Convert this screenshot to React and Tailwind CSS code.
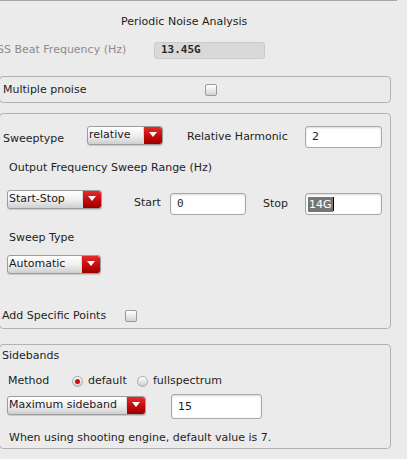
import React from "react";

const Combo = ({ label, w }) => {
  return (
    <div
      className={`flex h-[19px] ${w} rounded-[3px] border border-[#9c9c9c] bg-gradient-to-b from-white via-[#f0f0f0] to-[#cfcfcf] overflow-hidden shadow-[0_1px_1px_rgba(0,0,0,0.15)]`}
    >
      <span className="flex-1 pl-[1px] leading-[15px] text-[#1a1a1a]">{label}</span>
      <span className="w-[19px] flex justify-center pt-[5px] bg-gradient-to-b from-[#e52a2a] via-[#c70d0d] to-[#9c0000] border-l border-[#d8d8d8] rounded-r-[2px]">
        <svg width="8" height="5" viewBox="0 0 8 5">
          <path d="M0 0h8L4 5z" fill="#fff" />
        </svg>
      </span>
    </div>
  );
};

const Field = ({ w, h = "h-[22px]", children }) => {
  return (
    <div
      className={`${w} ${h} flex items-center pl-[6px] bg-white border border-[#a8a8a8] rounded-[3px] shadow-[inset_0_1px_2px_rgba(0,0,0,0.15)]`}
    >
      {children}
    </div>
  );
};

const Check = () => (
  <div className="w-[12px] h-[12px] rounded-[2px] border border-[#9a9a9a] bg-gradient-to-b from-white to-[#d4d4d4]" />
);

const Radio = ({ on }) => (
  <div className="w-[11px] h-[11px] rounded-full border border-[#a8a8a8] bg-gradient-to-b from-white to-[#cfcfcf] flex items-center justify-center">
    {on && <div className="w-[5px] h-[5px] rounded-full bg-[#d01010]" />}
  </div>
);

const App = () => {
  return (
    <div className="w-[407px] h-[459px] overflow-hidden bg-[#ebebeb] text-[11px] leading-[14px] text-[#1e1e1e] font-['DejaVu_Sans',sans-serif]">
      <div className="w-[397px] border-t border-[#a6a6a6]" />

      {/* title */}
      <div className="mt-[13px] h-[16px] leading-[16px] pl-[121px]">
        Periodic Noise Analysis
      </div>

      {/* beat frequency */}
      <div className="mt-[12px] flex items-center h-[16px]">
        <span className="ml-[-3px] w-[157px] text-[#8c8c8c]">SS Beat Frequency (Hz)</span>
        <div className="w-[111px] h-[17px] flex items-center pl-[6px] bg-[#d9d9d9] border border-[#cacaca] rounded-[3px] font-['DejaVu_Sans_Mono',monospace] font-bold text-[#2a2a2a]">
          13.45G
        </div>
      </div>

      {/* multiple pnoise */}
      <div className="mt-[18px] ml-[-1px] w-[392px] h-[27px] border border-[#b2b2b2] rounded-[4px] flex items-center">
        <span className="pl-[3px] w-[205px]">Multiple pnoise</span>
        <Check />
      </div>

      {/* sweep section */}
      <div className="mt-[10px] ml-[-1px] w-[392px] h-[216px] border border-[#b2b2b2] rounded-[4px] pl-[1px]">
        <div className="mt-[12px] flex h-[22px] items-start">
          <span className="pl-[2px] w-[86px] mt-[6px]">Sweeptype</span>
          <Combo label="relative" w="w-[76px]" />
          <span className="ml-[24px] w-[118px] mt-[4px]">Relative Harmonic</span>
          <Field w="w-[77px]">2</Field>
        </div>

        <div className="mt-[13px] pl-[8px]">Output Frequency Sweep Range (Hz)</div>

        <div className="mt-[15px] flex h-[26px] items-start">
          <div className="ml-[6px]">
            <Combo label="Start-Stop" w="w-[95px]" />
          </div>
          <span className="ml-[32px] w-[36px] mt-[6px]">Start</span>
          <div className="mt-[3px]">
            <Field w="w-[76px]">
              <span className="font-['DejaVu_Sans_Mono',monospace]">0</span>
            </Field>
          </div>
          <span className="ml-[17px] w-[42px] mt-[7px]">Stop</span>
          <div className="mt-[3px]">
            <Field w="w-[77px]">
              <span className="pl-[1px] pr-[1px] bg-[#767676] text-white leading-[15px] ml-[-4px]">14G</span>
              <span className="w-[1px] h-[14px] bg-black" />
            </Field>
          </div>
        </div>

        <div className="mt-[15px] pl-[8px]">Sweep Type</div>

        <div className="mt-[10px] ml-[6px]">
          <Combo label="Automatic" w="w-[94px]" />
        </div>

        <div className="mt-[35px] flex items-center h-[14px]">
          <span className="pl-[1px] w-[124px]">Add Specific Points</span>
          <Check />
        </div>
      </div>

      {/* sidebands */}
      <div className="mt-[15px] ml-[-1px] w-[392px] h-[105px] border border-[#b2b2b2] rounded-[4px] pl-[1px]">
        <div className="mt-[4px] pl-[1px]">Sidebands</div>

        <div className="mt-[11px] flex items-center h-[14px]">
          <span className="pl-[7px] w-[71px]">Method</span>
          <Radio on />
          <span className="ml-[5px] w-[49px]">default</span>
          <Radio />
          <span className="ml-[5px]">fullspectrum</span>
        </div>

        <div className="mt-[6px] flex h-[25px] items-start">
          <div className="ml-[6px] mt-[2px]">
            <Combo label="Maximum sideband" w="w-[139px]" />
          </div>
          <div className="ml-[25px]">
            <Field w="w-[91px]" h="h-[25px]">15</Field>
          </div>
        </div>

        <div className="mt-[12px] pl-[8px]">When using shooting engine, default value is 7.</div>
      </div>
    </div>
  );
};

export default App;
